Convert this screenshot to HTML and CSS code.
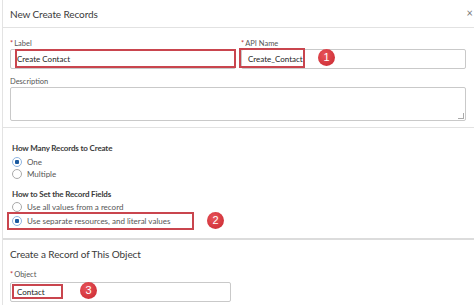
FILE: index.html
```
<!DOCTYPE html>
<html lang="en">
<head>
    <meta charset="UTF-8">
    <meta name="viewport" content="width=device-width, initial-scale=1.0">
    <title>New Create Records</title>
    <link rel="stylesheet" href="styles.css">
</head>
<body>
    <div class="modal">
        <div class="cabecera">
            <span class="titulo">New Create Records</span>
            <span class="cerrar">&times;</span>
        </div>

        <div class="seccion">
            <div class="fila">
                <div class="campo">
                    <div class="etiqueta"><span class="req">*</span>Label</div>
                    <div class="caja">
                        <div class="entrada">Create Contact</div>
                        <span class="marca marca-label"></span>
                    </div>
                </div>
                <div class="campo">
                    <div class="etiqueta"><span class="req">*</span>API Name</div>
                    <div class="caja">
                        <div class="entrada">Create_Contact</div>
                        <span class="marca marca-api"></span>
                        <span class="numero numero-1">1</span>
                    </div>
                </div>
            </div>
            <div class="campo descripcion">
                <div class="etiqueta">Description</div>
                <div class="area"><span class="esquina"></span></div>
            </div>
        </div>

        <div class="seccion opciones">
            <div class="pregunta">How Many Records to Create</div>
            <div class="radio"><span class="punto activo"></span>One</div>
            <div class="radio"><span class="punto"></span>Multiple</div>

            <div class="pregunta segunda">How to Set the Record Fields</div>
            <div class="radio"><span class="punto"></span>Use all values from a record</div>
            <div class="radio marcado">
                <span class="punto activo"></span>Use separate resources, and literal values
                <span class="marca marca-radio"></span>
                <span class="numero numero-2">2</span>
            </div>
        </div>

        <div class="seccion objeto">
            <div class="subtitulo">Create a Record of This Object</div>
            <div class="campo corto">
                <div class="etiqueta"><span class="req">*</span>Object</div>
                <div class="caja">
                    <div class="entrada">Contact</div>
                    <span class="marca marca-objeto"></span>
                    <span class="numero numero-3">3</span>
                </div>
            </div>
        </div>
    </div>
</body>
</html>
```

FILE: styles.css
```
body {
    margin: 0;
    background-color: #fff;
    font-family: Lato, "Open Sans", sans-serif;
    color: #3e3e3c;
}

.modal {
    margin-left: 2px;
    border-left: 1px solid #e3e3e3;
    height: 305px;
    overflow: hidden;
}

.cabecera {
    height: 27px;
    border-bottom: 1px solid #e2e2e2;
    display: flex;
    align-items: center;
    justify-content: space-between;
    padding: 0 1px 0 7px;
}

.titulo {
    font-size: 10px;
    letter-spacing: -0.1px;
    color: #3a3a3a;
}

.cerrar {
    font-size: 11px;
    color: #777;
    margin-top: -2px;
}

.seccion {
    padding: 10px 8px 0 7px;
}

.fila {
    display: grid;
    grid-template-columns: 226px 225px;
    gap: 5px;
}

.etiqueta {
    font-size: 7.5px;
    color: #555;
    height: 11px;
    line-height: 11px;
}

.req {
    color: #c23934;
    margin-right: 1px;
}

.caja {
    position: relative;
}

.entrada {
    height: 18px;
    border: 1px solid #c9c9c9;
    border-radius: 2px;
    font-size: 8px;
    line-height: 18px;
    padding-left: 6px;
    color: #222;
}

.descripcion {
    margin-top: 7px;
}

.area {
    position: relative;
    height: 32px;
    border: 1px solid #c9c9c9;
    border-radius: 2px;
}

.esquina {
    position: absolute;
    right: 1px;
    bottom: 1px;
    width: 5px;
    height: 5px;
    border-right: 1px solid #aaa;
    border-bottom: 1px solid #aaa;
}

.opciones {
    margin-top: 6px;
    border-top: 1px solid #e2e2e2;
    padding: 14px 8px 11px 9px;
}

.pregunta {
    font-size: 8px;
    letter-spacing: -0.15px;
    font-weight: bold;
    color: #3a3a3a;
    height: 12px;
    line-height: 12px;
    margin-bottom: 2px;
}

.segunda {
    margin-top: 8px;
    margin-bottom: 1px;
}

.radio {
    position: relative;
    display: flex;
    align-items: center;
    height: 12px;
    font-size: 8px;
    color: #555;
}

.punto {
    width: 10px;
    height: 10px;
    border: 1px solid #aaa;
    border-radius: 50%;
    margin-right: 5px;
    box-sizing: border-box;
    background-color: #fff;
}

.punto.activo {
    border-color: #8fb4e0;
    background: radial-gradient(circle, #1b5aa0 0, #1b5aa0 2px, #fff 2.5px);
}

.marcado {
    margin-top: 2px;
}

.objeto {
    border-top: 2px solid #dcdcdc;
    padding-top: 7px;
}

.subtitulo {
    font-size: 10px;
    letter-spacing: -0.1px;
    color: #3a3a3a;
    height: 14px;
    line-height: 14px;
    margin-bottom: 8px;
}

.corto {
    width: 221px;
}

.corto .etiqueta {
    height: 13px;
}

.marca {
    position: absolute;
    border: 2px solid #c9454e;
    box-sizing: border-box;
}

.marca-label {
    left: 5px;
    right: 0;
    top: 0;
    height: 19px;
}

.marca-api {
    left: -2px;
    width: 66px;
    top: -1px;
    height: 20px;
}

.marca-radio {
    left: -5px;
    width: 187px;
    top: -3px;
    height: 18px;
}

.marca-objeto {
    left: 2px;
    width: 51px;
    top: 2px;
    height: 15px;
}

.numero {
    position: absolute;
    width: 17px;
    height: 17px;
    border-radius: 50%;
    background: radial-gradient(circle at 40% 35%, #e8545a, #c8262e);
    color: #fff;
    font-size: 11px;
    line-height: 17px;
    text-align: center;
    font-family: "Liberation Sans", sans-serif;
}

.numero-1 {
    left: 77px;
    top: 0;
}

.numero-2 {
    left: 195px;
    top: -3px;
}

.numero-3 {
    left: 70px;
    top: 0;
}
```
